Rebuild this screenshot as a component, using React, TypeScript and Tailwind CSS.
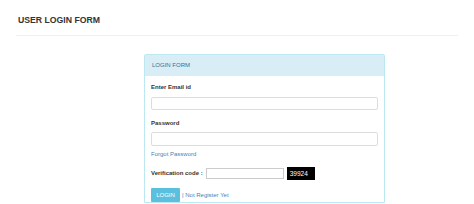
export default function App() {
  return (
    <div className="w-[474px] h-[204px] overflow-hidden bg-white text-[#333]" style={{ fontFamily: '"Liberation Sans", Arial, sans-serif' }}>
      <div className="pt-[15px] px-[18px]">
        <h1 className="text-[8.7px] leading-[11px] font-bold">USER LOGIN FORM</h1>
      </div>
      <div className="mt-[9px] mx-[16px] border-t border-[#f0f0f0]" />

      <div className="mt-[18px] ml-[144px] w-[241px] border border-[#bce8f1] rounded-t-[2px]">
        <div className="h-[21px] px-[7px] flex items-center bg-[#d9edf7] text-[#31708f] text-[6px]">
          LOGIN FORM
        </div>
        <div className="px-[6px] pt-[7px]">
          <label className="block text-[6px] leading-[8px] font-bold">Enter Email id</label>
          <input className="mt-[6px] block w-full h-[13px] border border-[#ddd] rounded-[2px] outline-none" />

          <label className="block mt-[9px] text-[6px] leading-[8px] font-bold">Password</label>
          <input type="password" className="mt-[5px] block w-full h-[14px] border border-[#ddd] rounded-[2px] outline-none" />

          <a href="#" className="block mt-[4px] text-[6px] leading-[8px] text-[#4a7fb5]">Forgot Password</a>

          <div className="mt-[9px] flex items-center">
            <span className="text-[6px] font-bold">Verification code :</span>
            <input className="ml-[3px] w-[78px] h-[11px] border border-[#ccc] outline-none" />
            <span className="ml-[3px] w-[28px] h-[13px] bg-black text-white text-[6.5px] flex items-center pl-[3px]">39924</span>
          </div>

          <div className="mt-[8px] flex items-center">
            <button className="w-[29px] h-[14px] bg-[#5bc0de] text-white text-[6px] rounded-[1px]">LOGIN</button>
            <span className="ml-[2px] text-[6px] text-[#4a7fb5]">| Not Register Yet</span>
          </div>
        </div>
      </div>
    </div>
  )
}
